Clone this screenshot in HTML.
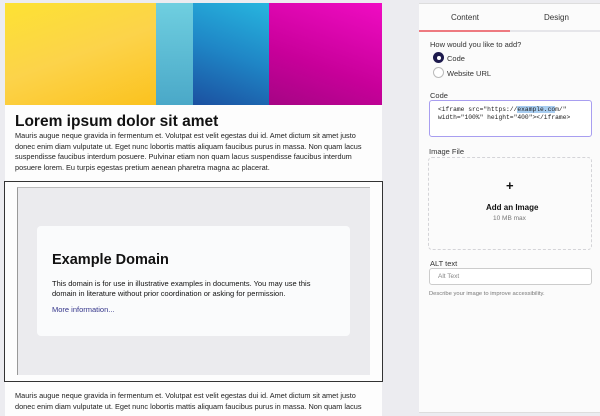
<!DOCTYPE html>
<html><head><meta charset="utf-8"><style>
*{margin:0;padding:0;box-sizing:border-box}
body{width:600px;height:416px;overflow:hidden;background:#ececf0;font-family:"Liberation Sans",sans-serif;position:relative;color:#111}
.a{position:absolute}
.card{left:5px;top:3px;width:377px;height:413px;background:#fdfdfd}
.p{font-size:7.35px;line-height:10.6px;color:#222;white-space:nowrap}
.panel{left:419px;top:3px;width:181px;height:410px;background:#fbfbfb;border-top:1px solid #ddd;border-bottom:1px solid #ddd}
.lab{font-size:7.5px;color:#333}
</style></head><body>
<div class="a card"></div>
<div class="a" style="left:5px;top:3px;width:151px;height:102px;background:linear-gradient(160deg,#fde233,#fcd34a 50%,#fbc21e)"></div>
<div class="a" style="left:156px;top:3px;width:37px;height:102px;background:linear-gradient(180deg,#6fcfe0,#4aa8c8)"></div>
<div class="a" style="left:193px;top:3px;width:76px;height:102px;background:linear-gradient(200deg,#27b6df,#1f86c6 50%,#1b50a0)"></div>
<div class="a" style="left:269px;top:3px;width:113px;height:102px;background:linear-gradient(200deg,#f00cc3,#c8009a 60%,#a50584)"></div>
<div class="a" style="left:15px;top:114px;font-size:15.5px;line-height:16px;font-weight:bold;color:#111">Lorem ipsum dolor sit amet</div>
<div class="a p" style="left:15px;top:131px">Mauris augue neque gravida in fermentum et. Volutpat est velit egestas dui id. Amet dictum sit amet justo<br>donec enim diam vulputate ut. Eget nunc lobortis mattis aliquam faucibus purus in massa. Non quam lacus<br>suspendisse faucibus interdum posuere. Pulvinar etiam non quam lacus suspendisse faucibus interdum<br>posuere lorem. Eu turpis egestas pretium aenean pharetra magna ac placerat.</div>
<div class="a" style="left:4px;top:181px;width:379px;height:201px;border:1px solid #333"></div>
<div class="a" style="left:17px;top:187px;width:353px;height:188px;background:#ebebee;border-left:1px solid #999;border-top:1px solid #bbb"></div>
<div class="a" style="left:37px;top:226px;width:313px;height:110px;background:#fafbfc;border-radius:4px"></div>
<div class="a" style="left:52px;top:252px;font-size:14.5px;font-weight:bold">Example Domain</div>
<div class="a" style="left:52px;top:279px;font-size:7.5px;line-height:10px;white-space:nowrap">This domain is for use in illustrative examples in documents. You may use this<br>domain in literature without prior coordination or asking for permission.</div>
<div class="a" style="left:52px;top:305px;font-size:7.5px;color:#34358a">More information...</div>
<div class="a p" style="left:15px;top:391px">Mauris augue neque gravida in fermentum et. Volutpat est velit egestas dui id. Amet dictum sit amet justo<br>donec enim diam vulputate ut. Eget nunc lobortis mattis aliquam faucibus purus in massa. Non quam lacus</div>

<div class="a panel"></div>
<div class="a" style="left:451px;top:13px;font-size:8px;color:#333">Content</div>
<div class="a" style="left:544px;top:13px;font-size:8px;color:#333">Design</div>
<div class="a" style="left:419px;top:30px;width:181px;height:2px;background:#e6e6ea"></div>
<div class="a" style="left:419px;top:30px;width:91px;height:2px;background:#ee7a80"></div>
<div class="a lab" style="left:430px;top:40px">How would you like to add?</div>
<div class="a" style="left:433px;top:52px;width:11px;height:11px;border-radius:50%;background:#1d1a4d"></div>
<div class="a" style="left:436.5px;top:55.5px;width:4px;height:4px;border-radius:50%;background:#fff"></div>
<div class="a lab" style="left:447px;top:54px">Code</div>
<div class="a" style="left:433px;top:67px;width:11px;height:11px;border-radius:50%;border:1px solid #bbb;background:#fff"></div>
<div class="a lab" style="left:447px;top:69px">Website URL</div>
<div class="a lab" style="left:430px;top:91px">Code</div>
<div class="a" style="left:429px;top:100px;width:163px;height:37px;border:1.5px solid #a89ef0;border-radius:3px;background:#fff;font-family:'Liberation Mono',monospace;font-size:6.3px;line-height:8px;padding:5px 0 0 8px;color:#222">&lt;iframe src="https://<span style="background:#a8cdf0">example.co</span>m/"<br>width="100%" height="400"&gt;&lt;/iframe&gt;</div>
<div class="a lab" style="left:429px;top:147px">Image File</div>
<div class="a" style="left:428px;top:157px;width:164px;height:93px;border:1px dashed #d4d4d8;border-radius:4px"></div>
<div class="a" style="left:506px;top:178px;font-size:13px;font-weight:bold">+</div>
<div class="a" style="left:486px;top:203px;font-size:8px;font-weight:bold">Add an Image</div>
<div class="a" style="left:493px;top:215px;font-size:6.5px;color:#777">10 MB max</div>
<div class="a lab" style="left:430px;top:259px">ALT text</div>
<div class="a" style="left:429px;top:268px;width:163px;height:17px;border:1px solid #ccc;border-radius:3px;background:#fff;font-size:6.5px;color:#888;padding:4px 0 0 8px">Alt Text</div>
<div class="a" style="left:429px;top:291px;font-size:5.8px;color:#777">Describe your image to improve accessibility.</div>
</body></html>
